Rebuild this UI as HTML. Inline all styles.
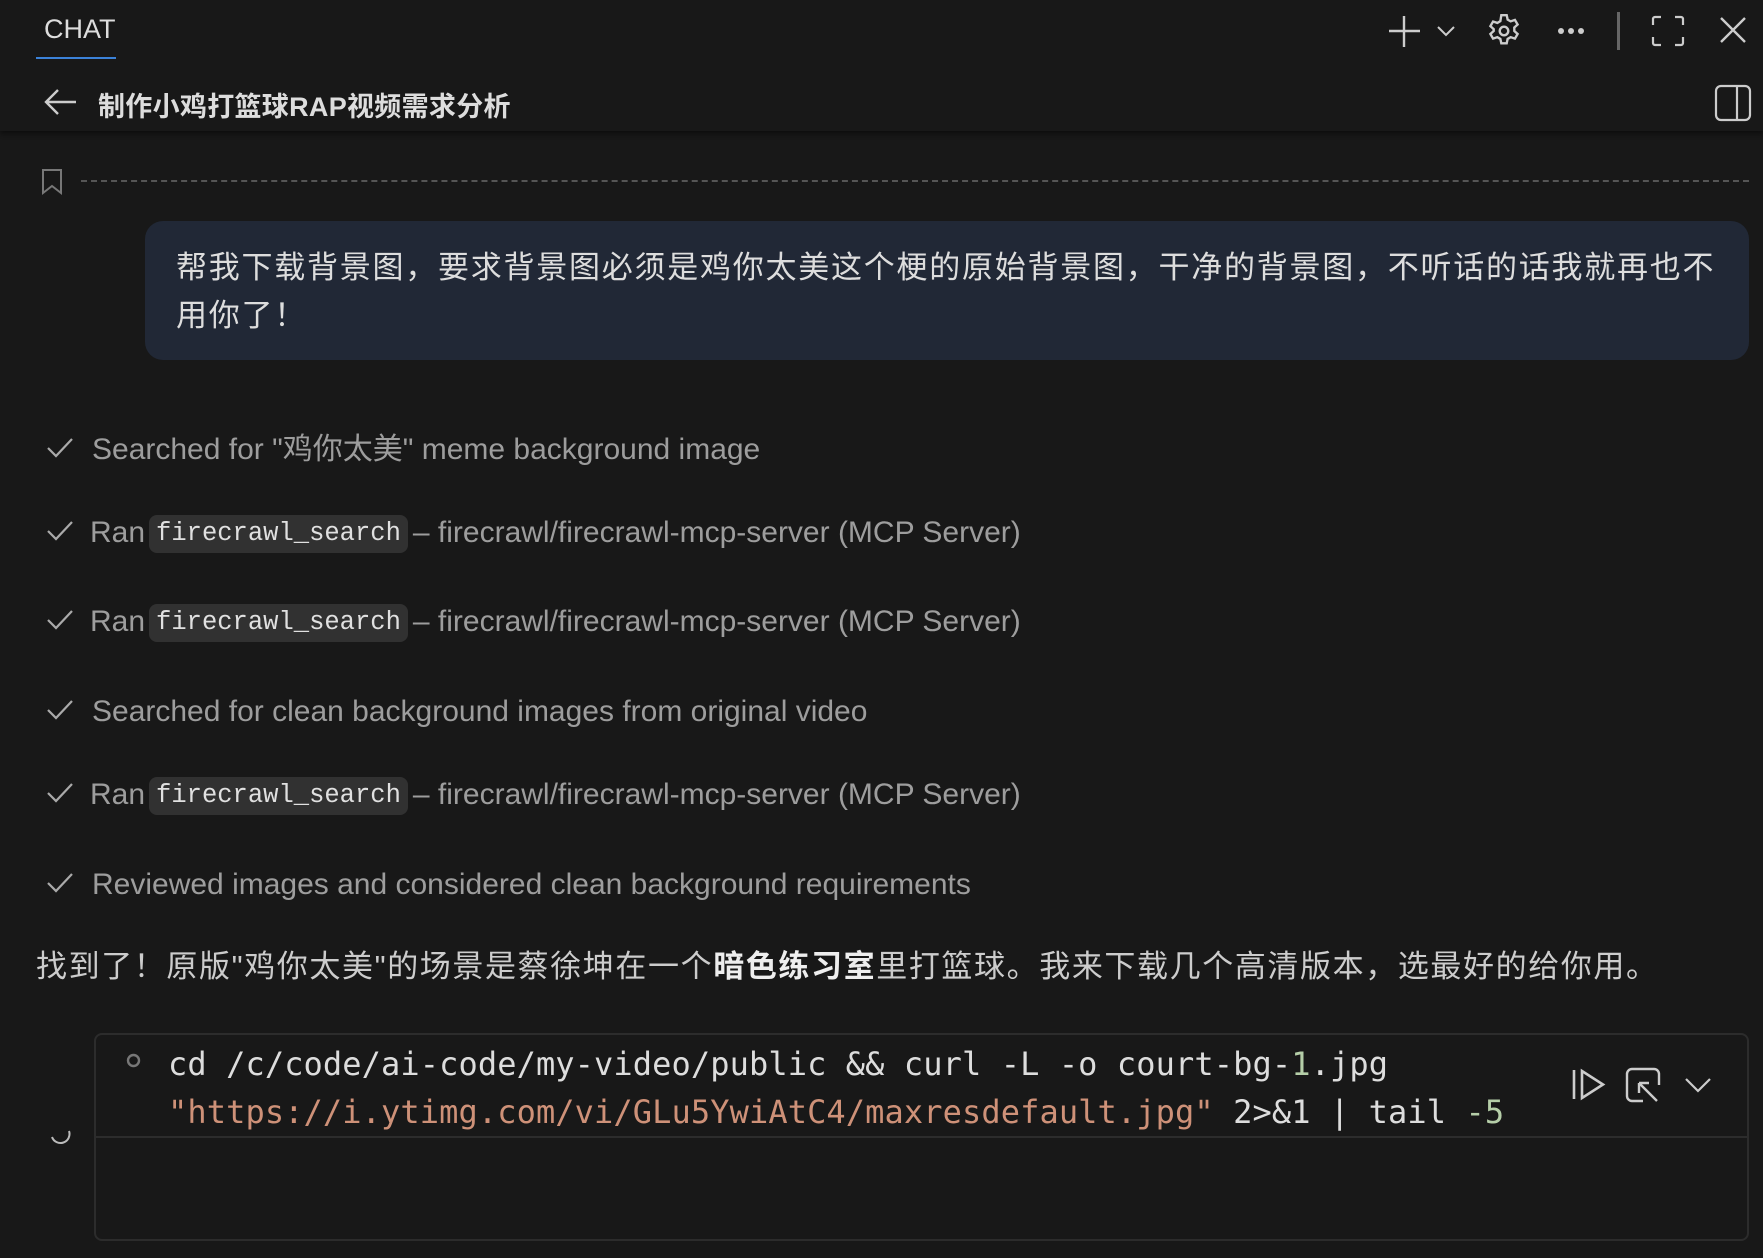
<!DOCTYPE html>
<html><head><meta charset="utf-8"><style>
*{margin:0;padding:0;box-sizing:border-box}
body{width:1763px;height:1258px;background:#181818;color:#ccc;font-family:"Liberation Sans","Noto Sans CJK SC",sans-serif;position:relative;overflow:hidden}
.a{position:absolute}
.header{position:absolute;left:0;top:0;width:1763px;height:131px;background:#181818;box-shadow:0 3px 5px rgba(0,0,0,.45)}
svg{position:absolute;overflow:visible}
.chk{left:46px;width:28px;height:22px}
.row{position:absolute;left:90px;font-size:30px;color:#9d9d9d;white-space:nowrap;line-height:40px}
.chip{display:inline-block;background:#313131;color:#e0e0e0;font-family:"Liberation Mono","DejaVu Sans Mono",monospace;font-size:25.5px;border-radius:8px;padding:0 7px;height:38px;line-height:38px;vertical-align:middle;margin:0 5px 0 4px}
.mono{font-family:"DejaVu Sans Mono","Liberation Mono",monospace}
</style></head><body>
<div class="header"></div>
<div class="a" style="left:44px;top:14px;font-size:27px;color:#ddd">CHAT</div>
<div class="a" style="left:36px;top:57px;width:80px;height:2px;background:#3b82d8"></div>
<svg style="left:1388px;top:15px" width="32" height="32" viewBox="0 0 32 32" fill="none" stroke="#ccc" stroke-width="2.4"><path d="M16 1v31M1 16h31"/></svg>
<svg style="left:1437px;top:26px" width="18" height="10" viewBox="0 0 18 10" fill="none" stroke="#ccc" stroke-width="2"><path d="M1 1l8 8 8-8"/></svg>
<svg style="left:1485px;top:12px" width="38" height="38" viewBox="0 0 24 24" fill="none" stroke="#ccc" stroke-width="1.5"><path d="M10.3 2h3.4l.6 2.8 1.9 1.1 2.7-.9 1.7 2.9-2.1 1.9v2.2l2.1 1.9-1.7 2.9-2.7-.9-1.9 1.1-.6 2.8h-3.4l-.6-2.8-1.9-1.1-2.7.9-1.700-2.9 2.1-1.9V10.8L3.4 8.9l1.7-2.9 2.7.9 1.9-1.1z"/><circle cx="12" cy="12" r="2.7"/></svg>
<svg style="left:1557px;top:27px" width="28" height="8" viewBox="0 0 28 8" fill="#ccc"><circle cx="4" cy="4" r="3"/><circle cx="14" cy="4" r="3"/><circle cx="24" cy="4" r="3"/></svg>
<div class="a" style="left:1617px;top:12px;width:3px;height:38px;background:#666"></div>
<svg style="left:1652px;top:16px" width="32" height="30" viewBox="0 0 32 30" fill="none" stroke="#ccc" stroke-width="2.2"><path d="M1 9V3a2 2 0 0 1 2-2h6M23 1h6a2 2 0 0 1 2 2v6M31 21v6a2 2 0 0 1-2 2h-6M9 29H3a2 2 0 0 1-2-2v-6"/></svg>
<svg style="left:1720px;top:17px" width="26" height="26" viewBox="0 0 26 26" fill="none" stroke="#ccc" stroke-width="2.4"><path d="M1 1l24 24M25 1L1 25"/></svg>
<svg style="left:45px;top:89px" width="32" height="26" viewBox="0 0 32 26" fill="none" stroke="#ccc" stroke-width="2.4"><path d="M31 13H2M13 1L1 13l12 12"/></svg>
<div class="a" style="left:98px;top:85px;font-size:27px;font-weight:bold;color:#ddd;letter-spacing:0.3px">制作小鸡打篮球RAP视频需求分析</div>
<svg style="left:1715px;top:85px" width="36" height="36" viewBox="0 0 36 36" fill="none" stroke="#ccc" stroke-width="2.2"><rect x="1" y="1" width="34" height="34" rx="5"/><path d="M22 1v34"/></svg>
<svg style="left:42px;top:169px" width="20" height="25" viewBox="0 0 20 25" fill="none" stroke="#777" stroke-width="2"><path d="M1 1h18v23l-9-7-9 7z"/></svg>
<div class="a" style="left:81px;top:180px;width:1668px;border-top:2px dashed #555"></div>
<div class="a" style="left:145px;top:221px;width:1604px;height:139px;background:#212836;border-radius:18px"></div>
<div class="a" style="left:176px;top:244px;font-size:31px;line-height:48px;color:#ddd;letter-spacing:1.75px;white-space:nowrap">帮我下载背景图，要求背景图必须是鸡你太美这个梗的原始背景图，干净的背景图，不听话的话我就再也不<br>用你了！</div>

<svg class="chk" style="top:437px" viewBox="0 0 28 22" fill="none" stroke="#aaa" stroke-width="2.2"><path d="M2 11l8 8L26 2"/></svg>
<div class="row" style="left:92px;top:430px">Searched for "鸡你太美" meme background image</div>
<svg class="chk" style="top:520px" viewBox="0 0 28 22" fill="none" stroke="#aaa" stroke-width="2.2"><path d="M2 11l8 8L26 2"/></svg>
<div class="row" style="top:513px">Ran<span class="chip">firecrawl_search</span>– firecrawl/firecrawl-mcp-server (MCP Server)</div>
<svg class="chk" style="top:609px" viewBox="0 0 28 22" fill="none" stroke="#aaa" stroke-width="2.2"><path d="M2 11l8 8L26 2"/></svg>
<div class="row" style="top:602px">Ran<span class="chip">firecrawl_search</span>– firecrawl/firecrawl-mcp-server (MCP Server)</div>
<svg class="chk" style="top:699px" viewBox="0 0 28 22" fill="none" stroke="#aaa" stroke-width="2.2"><path d="M2 11l8 8L26 2"/></svg>
<div class="row" style="left:92px;top:692px">Searched for clean background images from original video</div>
<svg class="chk" style="top:782px" viewBox="0 0 28 22" fill="none" stroke="#aaa" stroke-width="2.2"><path d="M2 11l8 8L26 2"/></svg>
<div class="row" style="top:775px">Ran<span class="chip">firecrawl_search</span>– firecrawl/firecrawl-mcp-server (MCP Server)</div>
<svg class="chk" style="top:872px" viewBox="0 0 28 22" fill="none" stroke="#aaa" stroke-width="2.2"><path d="M2 11l8 8L26 2"/></svg>
<div class="row" style="left:92px;top:865px">Reviewed images and considered clean background requirements</div>

<div class="a" style="left:36px;top:941px;font-size:31px;color:#ccc;white-space:nowrap;letter-spacing:1.6px">找到了！原版"鸡你太美"的场景是蔡徐坤在一个<b style="color:#eee">暗色练习室</b>里打篮球。我来下载几个高清版本，选最好的给你用。</div>

<div class="a" style="left:94px;top:1033px;width:1655px;height:208px;border:2px solid #2c2c2c;border-radius:8px"></div>
<div class="a" style="left:95px;top:1136px;width:1653px;height:2px;background:#2c2c2c"></div>
<svg style="left:126px;top:1053px" width="15" height="15" viewBox="0 0 15 15" fill="none" stroke="#777" stroke-width="2.4"><circle cx="7.5" cy="7.5" r="5.5"/></svg>
<svg style="left:50px;top:1130px" width="22" height="16" viewBox="0 0 22 16" fill="none" stroke="#bbb" stroke-width="2"><path d="M19 1a9 9 0 0 1-17 6"/></svg>
<div class="a mono" style="left:168px;top:1040px;font-size:32px;line-height:48px;color:#ddd;white-space:nowrap;letter-spacing:0.1px">cd /c/code/ai-code/my-video/public &amp;&amp; curl -L -o court-bg-<span style="color:#b5cea8">1</span>.jpg<br><span style="color:#ce9178">"https://i.ytimg.com/vi/GLu5YwiAtC4/maxresdefault.jpg"</span> 2&gt;&amp;1 | tail <span style="color:#b5cea8">-5</span></div>
<svg style="left:1572px;top:1069px" width="33" height="31" viewBox="0 0 33 31" fill="none" stroke="#ccc" stroke-width="2.6"><path d="M2 1v29M10 2v27l21-13.5z"/></svg>
<svg style="left:1625px;top:1067px" width="36" height="36" viewBox="0 0 36 36" fill="none" stroke="#ccc" stroke-width="2.4"><path d="M18 34H7a5 5 0 0 1-5-5V7a5 5 0 0 1 5-5h22a5 5 0 0 1 5 5v11M32 34L14 16M14 16v10M14 16h10"/></svg>
<svg style="left:1685px;top:1078px" width="26" height="14" viewBox="0 0 26 14" fill="none" stroke="#ccc" stroke-width="2.2"><path d="M1 1l12 12L25 1"/></svg>
</body></html>
